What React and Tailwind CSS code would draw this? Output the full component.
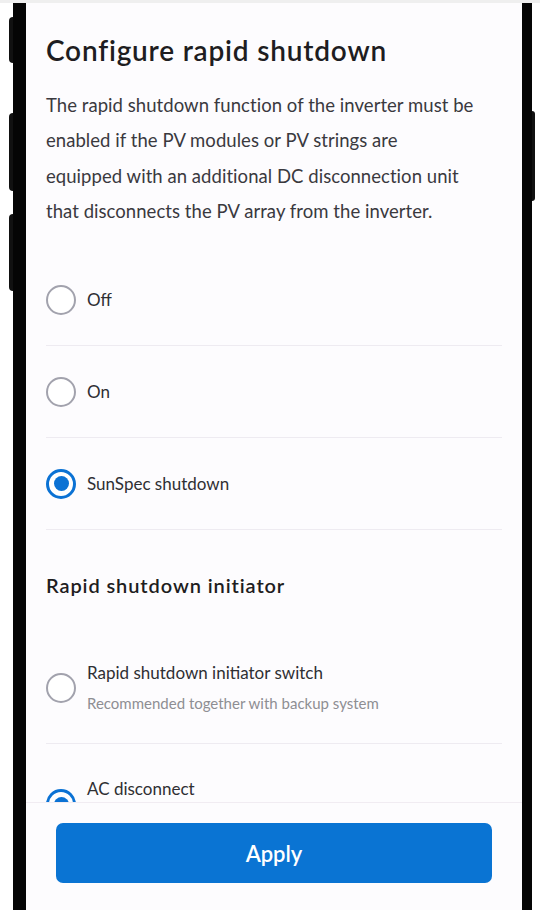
import React from "react";

function Radio({ checked }) {
  return checked ? (
    <div className="w-[30px] h-[30px] rounded-full border-[3px] border-[#0b72d4] flex items-center justify-center shrink-0 bg-white">
      <div className="w-[15px] h-[15px] rounded-full bg-[#0b72d4]" />
    </div>
  ) : (
    <div className="w-[30px] h-[30px] rounded-full border-2 border-[#a2a2ad] shrink-0 bg-white" />
  );
}

function Row({ label, checked }) {
  return (
    <div className="flex items-center gap-[11px] h-[92px] border-b border-[#eeebf1]">
      <Radio checked={checked} />
      <span className="text-[17px] text-[#2f2f33]">{label}</span>
    </div>
  );
}

function Row2({ label, sub, checked, last }) {
  return (
    <div className={"flex items-center gap-[11px] pt-[30px] pb-[25px] " + (last ? "" : "border-b border-[#eeebf1]")}>
      <Radio checked={checked} />
      <div className="flex flex-col">
        <span className="text-[17px] leading-[30px] text-[#2f2f33]">{label}</span>
        {sub ? (
          <span className="text-[15px] leading-[30px] text-[#8e8e93]">{sub}</span>
        ) : (
          <span className="h-[30px]" />
        )}
      </div>
    </div>
  );
}

export default function App() {
  return (
    <div
      className="w-[540px] h-[910px] bg-white flex flex-col overflow-hidden"
      style={{ fontFamily: "Lato, 'Noto Sans', sans-serif" }}
    >
      <div className="h-[3px] bg-[#efefef] shrink-0" />
      <div className="flex flex-1 min-h-0">
        {/* left side buttons */}
        <div className="w-[13px] flex flex-col items-end shrink-0">
          <div className="w-[4px] h-[46px] bg-[#111] rounded-l-sm mt-[14px]" />
          <div className="w-[4px] h-[78px] bg-[#111] rounded-l-sm mt-[50px]" />
          <div className="w-[4px] h-[77px] bg-[#111] rounded-l-sm mt-[23px]" />
        </div>
        <div className="w-[13px] bg-[#050505] shrink-0" />
        {/* screen */}
        <div className="w-[496px] bg-[#fdfcfe] flex flex-col shrink-0">
          <div className="flex-1 min-h-0 overflow-hidden px-[20px]">
            <h1 className="text-[28px] font-semibold tracking-[0.8px] text-[#1e1d21] leading-[36px] mt-[29px]">
              Configure rapid shutdown
            </h1>
            <p className="text-[18.5px] tracking-[0.05px] leading-[35.3px] text-[#3a393e] mt-[20px] mb-[-1px]">
              The rapid shutdown function of the inverter must be
              <br />
              enabled if the PV modules or PV strings are
              <br />
              equipped with an additional DC disconnection unit
              <br />
              that disconnects the PV array from the inverter.
            </p>
            <div className="mt-[26px]">
              <Row label="Off" />
              <Row label="On" />
              <Row label="SunSpec shutdown" checked />
            </div>
            <h2 className="text-[20px] font-semibold tracking-[0.9px] text-[#1e1d21] leading-[30px] mt-[40px]">
              Rapid shutdown initiator
            </h2>
            <div className="mt-[28px]">
              <Row2 label="Rapid shutdown initiator switch" sub="Recommended together with backup system" />
              <Row2 label="AC disconnect" checked last />
            </div>
          </div>
          <div className="h-[108px] shrink-0 border-t border-[#f1ecf2] bg-[#fdfcfe] px-[30px] pt-[20px]">
            <button className="w-full h-[60px] rounded-[7px] bg-[#0a74d3] text-white text-[22px] font-semibold">
              Apply
            </button>
          </div>
        </div>
        <div className="w-[10px] bg-[#050505] shrink-0" />
        <div className="w-[8px] flex flex-col shrink-0">
          <div className="w-[3px] h-[90px] bg-[#111] rounded-r-sm mt-[108px]" />
        </div>
      </div>
    </div>
  );
}
